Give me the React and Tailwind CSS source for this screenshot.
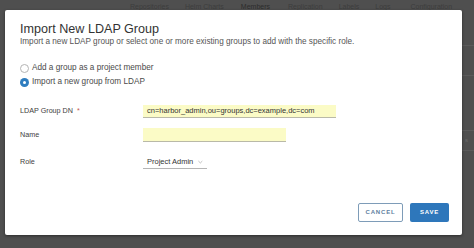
import React from "react";

const font = { fontFamily: '"Liberation Sans", Arial, sans-serif' };

function Radio({ checked, label }) {
  return (
    <div className="flex items-center h-[12px]">
      {checked ? (
        <span className="w-[9px] h-[9px] rounded-full bg-[#2f7dbf] flex items-center justify-center">
          <span className="w-[3px] h-[3px] rounded-full bg-white" />
        </span>
      ) : (
        <span className="w-[9px] h-[9px] rounded-full border border-[#b4b4b4] bg-white" />
      )}
      <span className="ml-[3px] text-[8.2px] text-[#4a4a4a] whitespace-nowrap">{label}</span>
    </div>
  );
}

function Row({ label, required, children, className = "" }) {
  return (
    <div className={"flex items-center " + className}>
      <div className="w-[123px] text-[7.2px] text-[#3e3e3e] whitespace-nowrap">
        {label}
        {required && <span className="ml-[4px] text-[#c4574f]">*</span>}
      </div>
      {children}
    </div>
  );
}

export default function App() {
  const tabs = [
    ["Repositories", "ml-[130px]"],
    ["Helm Charts", "ml-[16px]"],
    ["Members", "ml-[17px] text-[#2c2c2c]"],
    ["Replication", "ml-[18px]"],
    ["Labels", "ml-[16px]"],
    ["Logs", "ml-[16px]"],
    ["Configuration", "ml-[20px]"],
  ];
  return (
    <div className="relative w-[474px] h-[248px] bg-[#4f4f4f] overflow-hidden" style={font}>
      {/* background page */}
      <div className="flex whitespace-nowrap h-[11px] items-start pt-[2px] text-[7px] text-[#3d3d3d]">
        {tabs.map(([t, c]) => (
          <span key={t} className={c}>{t}</span>
        ))}
      </div>
      <div className="ml-[300px] mt-[34px] border-b border-[#5b5b5b]" />
      <div className="ml-[300px] mt-[29px] border-b border-[#5b5b5b]" />
      <div className="ml-[300px] mt-[54px] border-b border-[#5b5b5b]" />
      <div className="ml-[462px] h-[19px] flex items-center pl-[3px] text-[6px] text-[#6a6a6a]">s</div>
      <div className="ml-[300px] border-b border-[#5b5b5b]" />

      {/* modal */}
      <div className="absolute left-[5px] top-[10px] w-[457px] h-[225px] bg-white rounded-[2px] shadow-[0_1px_3px_rgba(0,0,0,0.45)] flex flex-col pt-[11px] px-[15px] pb-[13px]">
        <div className="text-[12.6px] leading-[16px] text-[#333] whitespace-nowrap">Import New LDAP Group</div>
        <div className="text-[8.2px] leading-[10px] text-[#555] whitespace-nowrap">
          Import a new LDAP group or select one or more existing groups to add with the specific role.
        </div>
        <div className="mt-[15px]">
          <Radio label="Add a group as a project member" />
        </div>
        <div className="mt-[2px]">
          <Radio checked label="Import a new group from LDAP" />
        </div>

        <Row label="LDAP Group DN" required className="mt-[17px]">
          <div className="w-[193px] h-[13px] bg-[#fbfbc6] border-b border-[#b9b9a8] flex items-center px-[4px] text-[7.5px] text-[#333] whitespace-nowrap">
            cn=harbor_admin,ou=groups,dc=example,dc=com
          </div>
        </Row>
        <Row label="Name" className="mt-[10px]">
          <div className="w-[143px] h-[14px] bg-[#fbfbc6] border-b border-[#b9b9a8]" />
        </Row>
        <Row label="Role" className="mt-[13px]">
          <div className="w-[64px] h-[14px] border-b border-[#b5b5b5] flex items-center px-[4px] text-[7.5px] text-[#333] whitespace-nowrap">
            <span>Project Admin</span>
            <svg className="ml-[5px]" width="6" height="4" viewBox="0 0 6 4">
              <path d="M0.5 0.8 L3 3.2 L5.5 0.8" fill="none" stroke="#9a9a9a" strokeWidth="0.8" />
            </svg>
          </div>
        </Row>

        <div className="mt-auto flex justify-end gap-[7px]">
          <button className="w-[45px] h-[19px] border border-[#7e9cb8] rounded-[2px] text-[6px] font-bold tracking-[0.8px] text-[#5f7f9f] bg-white">
            CANCEL
          </button>
          <button className="w-[39px] h-[19px] rounded-[2px] text-[6px] font-bold tracking-[0.8px] text-white bg-[#2e77bb] mr-[-2px]">
            SAVE
          </button>
        </div>
      </div>
    </div>
  );
}
